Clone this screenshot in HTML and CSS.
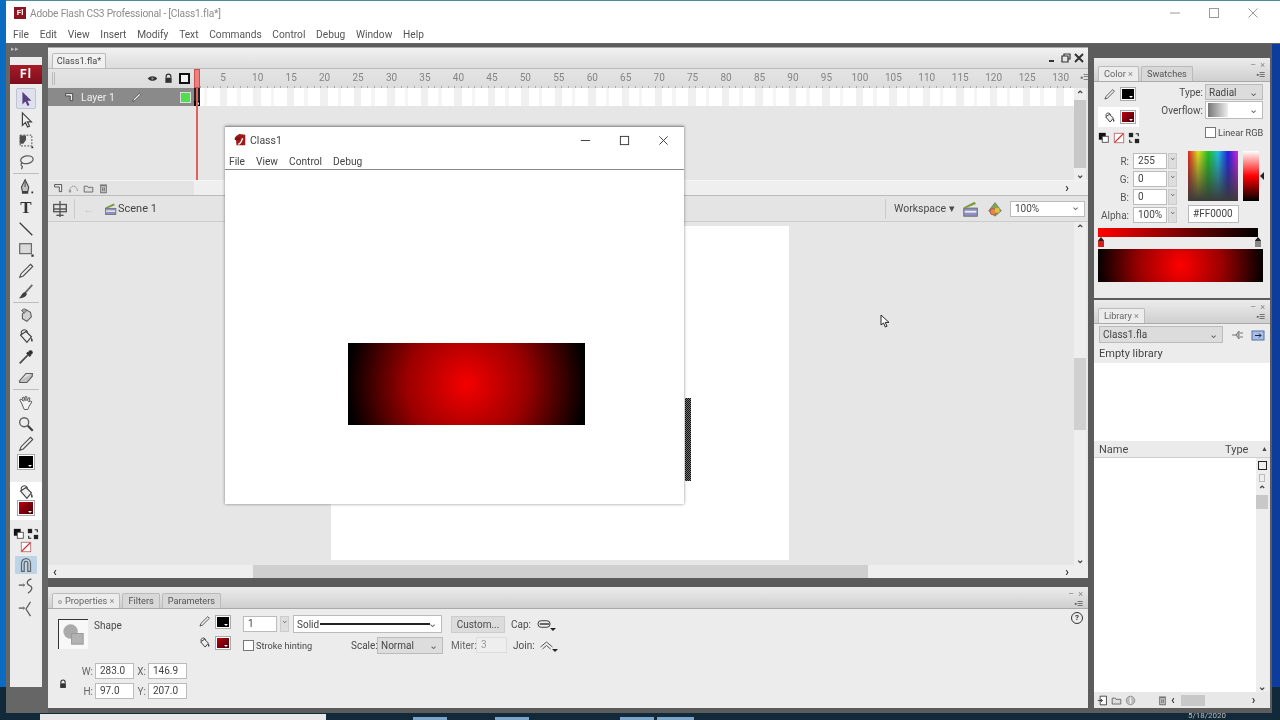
FILE: index.html
```html
<!DOCTYPE html>
<html lang="en">
<head>
<meta charset="utf-8">
<title>Adobe Flash CS3 Professional</title>
<link rel="stylesheet" href="styles.css">
</head>
<body>
<svg class="defs" width="0" height="0" aria-hidden="true">
  <symbol id="i-arrow" viewBox="0 0 20 20"><path d="M6 2v14l3.4-3.2 2.3 5 2.2-1-2.3-4.8H16z"/></symbol>
  <symbol id="i-free" viewBox="0 0 20 20"><rect x="3.5" y="3.5" width="13" height="12" fill="none" stroke="#222" stroke-dasharray="2 1.5"/><path d="M3 4h7v5l-3 4H3z" fill="#333"/><rect x="16" y="16" width="2" height="2" fill="#111"/></symbol>
  <symbol id="i-lasso" viewBox="0 0 20 20"><ellipse cx="11" cy="7.5" rx="7" ry="4.3" fill="none" stroke="#444" stroke-width="1.4" transform="rotate(-10 11 7.5)"/><path d="M6 11c-2 1-2 3 0 4l-1 3" fill="none" stroke="#444" stroke-width="1.4"/></symbol>
  <symbol id="i-pen" viewBox="0 0 20 20"><path d="M9 2l4 8-1 5H6l-1-5z" fill="#bbb" stroke="#222" stroke-width="1.2"/><path d="M9 4v6" stroke="#222"/><rect x="5.5" y="15" width="7" height="2.5" fill="#222"/><rect x="16" y="15" width="2" height="2" fill="#111"/></symbol>
  <symbol id="i-line" viewBox="0 0 20 20"><path d="M3 3l14 14" stroke="#222" stroke-width="1.5"/></symbol>
  <symbol id="i-rect" viewBox="0 0 20 20"><rect x="3" y="3" width="13" height="11" fill="#d8d8d8" stroke="#555" stroke-width="1.4"/><rect x="16" y="15" width="2.5" height="2.5" fill="#111"/></symbol>
  <symbol id="i-pencil" viewBox="0 0 20 20"><path d="M15 2.5l2.5 2.5L7 15.500 3 17l1.500-4z" fill="#eee" stroke="#333" stroke-width="1.200"/></symbol>
  <symbol id="i-brush" viewBox="0 0 20 20"><path d="M17 2L9 11" stroke="#555" stroke-width="2"/><path d="M9 10l2 2c-1 4-5 5-9 5 3-2 3-6 7-7z" fill="#222"/></symbol>
  <symbol id="i-ink" viewBox="0 0 20 20"><path d="M6 9l4-5 5 3 1 5-5 5-5-3z" fill="#ccc" stroke="#444" stroke-width="1.200"/><path d="M5 5l3-2 3 2-3 3z" fill="#999" stroke="#444"/></symbol>
  <symbol id="i-bucket" viewBox="0 0 20 20"><path d="M4 9l6-4 6 6-5 6z" fill="#eee" stroke="#222" stroke-width="1.300"/><path d="M5 8c-2-5 5-7 7-2" fill="none" stroke="#222" stroke-width="1.200"/><path d="M16 12c1.500 1.500 2 3 1 4.500-1.500 0-2-2-1-4.500z" fill="#222"/></symbol>
  <symbol id="i-drop" viewBox="0 0 20 20"><path d="M3 17L12 8" stroke="#333" stroke-width="2"/><path d="M11 5l4 4" stroke="#111" stroke-width="2.500"/><circle cx="15" cy="5" r="2.500" fill="#111"/></symbol>
  <symbol id="i-eraser" viewBox="0 0 20 20"><path d="M3 13l7-8h7l-6 8z" fill="#ddd" stroke="#444" stroke-width="1.200"/><path d="M3 13v2h8l6-7V5" fill="#bbb" stroke="#444" stroke-width="1.200"/></symbol>
  <symbol id="i-hand" viewBox="0 0 20 20"><path d="M5 10L3 6.500l1.500-1L7 8 6 4l1.700-.5L9 7.500V3h1.800l.4 4.500L13 4l1.500.7-1.500 4 2.500-1 1 1-3 5-1.500 3.500H8z" fill="#f4f4f4" stroke="#333" stroke-width="1"/></symbol>
  <symbol id="i-zoom" viewBox="0 0 20 20"><circle cx="8" cy="8" r="5" fill="#eee" stroke="#444" stroke-width="1.500"/><path d="M12 12l5.500 5.500" stroke="#222" stroke-width="2.500"/></symbol>
  <symbol id="i-snap" viewBox="0 0 20 20"><path d="M5 17V8a5 5 0 0110 0v9h-3V8a2 2 0 00-4 0v9z" fill="none" stroke="#555" stroke-width="1.400"/></symbol>
  <symbol id="i-smooth" viewBox="0 0 20 20"><path d="M2 9h5" stroke="#444" stroke-width="1.500"/><path d="M7 7v4l2-2z" fill="#444"/><path d="M16 2c-6 2-6 6-1 8 3 2 1 6-3 8" fill="none" stroke="#444" stroke-width="1.400"/></symbol>
  <symbol id="i-straight" viewBox="0 0 20 20"><path d="M2 9h5" stroke="#444" stroke-width="1.500"/><path d="M7 7v4l2-2z" fill="#444"/><path d="M15 2L10 10l5 8" fill="none" stroke="#444" stroke-width="1.400"/></symbol>
  <symbol id="i-swap" viewBox="0 0 14 14"><rect x="1" y="1" width="8" height="8" fill="#111"/><rect x="5" y="5" width="7" height="7" fill="#fff" stroke="#444"/></symbol>
  <symbol id="i-none" viewBox="0 0 14 14"><rect x="1.500" y="1.500" width="11" height="11" fill="#fff" stroke="#b66"/><path d="M2 12L12 2" stroke="#d33" stroke-width="1.400"/></symbol>
  <symbol id="i-rev" viewBox="0 0 14 14"><rect x="1" y="1" width="5" height="5" fill="#222"/><rect x="8" y="8" width="5" height="5" fill="#222"/><path d="M9 2h3v3M5 12H2V9" fill="none" stroke="#222" stroke-width="1.300"/></symbol>
  <symbol id="i-eye" viewBox="0 0 14 14"><path d="M1 7c3-4 9-4 12 0-3 4-9 4-12 0z" fill="#333"/><circle cx="7" cy="7" r="1.500" fill="#888"/></symbol>
  <symbol id="i-lock" viewBox="0 0 14 14"><path d="M4 6V4.500a3 3 0 016 0V6" fill="none" stroke="#333" stroke-width="1.500"/><rect x="3" y="6" width="8" height="6.500" fill="#333"/></symbol>
  <symbol id="i-layer" viewBox="0 0 14 14"><path d="M2 2h9v9H8V5H2z" fill="#eee" stroke="#333"/></symbol>
  <symbol id="i-guide" viewBox="0 0 14 14"><path d="M2 10c1-8 9-8 10 0" fill="none" stroke="#666" stroke-dasharray="2 1"/><rect x="1" y="9" width="3" height="3" fill="#999"/></symbol>
  <symbol id="i-folder" viewBox="0 0 14 14"><path d="M1.500 4h4l1 1.500h6v6h-11z" fill="#ddd" stroke="#555"/></symbol>
  <symbol id="i-trash" viewBox="0 0 14 14"><rect x="3.500" y="3.500" width="7" height="9" fill="#ccc" stroke="#555"/><path d="M2.500 2.500h9M6 5.500v5M8 5.500v5" stroke="#555"/></symbol>
  <symbol id="i-clap" viewBox="0 0 20 20"><rect x="2" y="9" width="15" height="9" fill="#8f8fc4" stroke="#666"/><rect x="3" y="12" width="13" height="2" fill="#eee"/><path d="M2 8l12-6 1.500 2.500L3 9.500z" fill="#7a9a3a"/></symbol>
  <symbol id="i-sym" viewBox="0 0 20 20"><path d="M3 12l7-9 7 9-7 6z" fill="#7fa84a" stroke="#777"/><circle cx="8" cy="13" r="3.500" fill="#e58a3c" stroke="#a55"/><rect x="10" y="9" width="5" height="5" fill="#e0c040"/></symbol>
  <symbol id="i-mov" viewBox="0 0 20 20"><path d="M10 1v18M3 10h14" stroke="#555" stroke-width="1.500"/><rect x="3" y="5" width="14" height="8" fill="none" stroke="#555" stroke-width="1.500"/><path d="M6 17h8" stroke="#555" stroke-width="1.500"/></symbol>
  <symbol id="i-shape" viewBox="0 0 30 30"><circle cx="12" cy="12" r="7.500" fill="#aaa"/><rect x="13" y="14" width="12" height="11" fill="#b2b2b2" stroke="#999"/></symbol>
  <symbol id="i-flash" viewBox="0 0 16 16"><path d="M3 4l4-3 7 1v12H4z" fill="#a01818"/><path d="M2 5h6v3H2z" fill="#7a1010"/><path d="M6 13c3-1 4-4 5-7" stroke="#fff" stroke-width="1.500" fill="none"/></symbol>
  <symbol id="i-cap" viewBox="0 0 16 10"><rect x="1" y="1.500" width="13" height="7" rx="3.500" fill="none" stroke="#333"/><path d="M3 5h10" stroke="#333" stroke-width="1.500"/></symbol>
  <symbol id="i-join" viewBox="0 0 14 10"><path d="M1 7l6-5 6 5M3 9l4-3.500L11 9" fill="none" stroke="#555"/></symbol>
  <symbol id="i-new" viewBox="0 0 14 14"><path d="M4 1.500h8v11H4z" fill="#fff" stroke="#222"/><path d="M1 7h6M5 5l2 2-2 2" fill="none" stroke="#222"/></symbol>
  <symbol id="i-info" viewBox="0 0 14 14"><circle cx="7" cy="7" r="5.500" fill="#bbb" stroke="#888"/><rect x="6" y="3" width="2" height="8" fill="#eee"/></symbol>
  <symbol id="i-pin" viewBox="0 0 14 14"><path d="M2 7h4l3-4v8L6 7" fill="#bbb" stroke="#777"/><path d="M10 5h3M10 9h3" stroke="#777"/></symbol>
  <symbol id="i-libfolder" viewBox="0 0 14 14"><rect x="1" y="3" width="12" height="9" fill="#a8c0e8" stroke="#5570a0"/><path d="M4 7.500h6M8 5.500l2 2-2 2" fill="none" stroke="#224"/></symbol>
  <symbol id="i-cursor" viewBox="0 0 10 14"><path d="M1 1v10l2.500-2 1.800 4 1.700-.8-1.800-3.800H9z" fill="#fff" stroke="#111" stroke-width=".9"/></symbol>
</svg>

<div class="screen">
  <header class="titlebar">
    <span class="app-icon">Fl</span>
    <span class="app-title">Adobe Flash CS3 Professional - [Class1.fla*]</span>
    <span class="win-buttons">
      <svg class="wb" viewBox="0 0 12 12"><path d="M1 6h10"/></svg>
      <svg class="wb" viewBox="0 0 12 12"><rect x="1.500" y="1.500" width="9" height="9" fill="none"/></svg>
      <svg class="wb" viewBox="0 0 12 12"><path d="M1.500 1.500l9 9M10.500 1.500l-9 9"/></svg>
    </span>
  </header>
  <nav class="menubar">
    <span>File</span><span>Edit</span><span>View</span><span>Insert</span><span>Modify</span><span>Text</span><span>Commands</span><span>Control</span><span>Debug</span><span>Window</span><span>Help</span>
  </nav>

  <div class="workspace">
    <aside class="toolcol">
      <div class="tool-grip">▸▸</div>
      <div class="tools">
        <div class="fl-logo">Fl</div>
        <div class="tool selected"><svg class="ic purple"><use href="#i-arrow"/></svg></div>
        <div class="tool"><svg class="ic hollow"><use href="#i-arrow"/></svg></div>
        <div class="tool"><svg class="ic"><use href="#i-free"/></svg></div>
        <div class="tool"><svg class="ic"><use href="#i-lasso"/></svg></div>
        <div class="tool-sep"></div>
        <div class="tool"><svg class="ic"><use href="#i-pen"/></svg></div>
        <div class="tool tool-t">T</div>
        <div class="tool"><svg class="ic"><use href="#i-line"/></svg></div>
        <div class="tool"><svg class="ic"><use href="#i-rect"/></svg></div>
        <div class="tool"><svg class="ic"><use href="#i-pencil"/></svg></div>
        <div class="tool"><svg class="ic"><use href="#i-brush"/></svg></div>
        <div class="tool-sep tight"></div>
        <div class="tool"><svg class="ic"><use href="#i-ink"/></svg></div>
        <div class="tool"><svg class="ic"><use href="#i-bucket"/></svg></div>
        <div class="tool"><svg class="ic"><use href="#i-drop"/></svg></div>
        <div class="tool"><svg class="ic"><use href="#i-eraser"/></svg></div>
        <div class="tool-sep"></div>
        <div class="tool"><svg class="ic"><use href="#i-hand"/></svg></div>
        <div class="tool"><svg class="ic"><use href="#i-zoom"/></svg></div>
        <div class="tool tool-short"><svg class="ic"><use href="#i-pencil"/></svg></div>
        <div class="tool tool-swatch"><span class="swatch black"></span></div>
        <div class="tool-fill">
          <svg class="ic"><use href="#i-bucket"/></svg>
          <span class="swatch red"></span>
        </div>
        <div class="tool-mini">
          <svg class="mini"><use href="#i-swap"/></svg><svg class="mini"><use href="#i-rev"/></svg>
        </div>
        <div class="tool-none"><svg class="mini"><use href="#i-none"/></svg></div>
        <div class="tool tool-snap"><svg class="ic"><use href="#i-snap"/></svg></div>
        <div class="tool tool-tall"><svg class="ic"><use href="#i-smooth"/></svg></div>
        <div class="tool tool-tall"><svg class="ic"><use href="#i-straight"/></svg></div>
      </div>
    </aside>

    <main class="maincol">
      <section class="doc">
        <div class="doc-tabs">
          <span class="doc-tab">Class1.fla*</span>
          <span class="doc-ctrls">
            <svg class="dc" viewBox="0 0 10 10"><path d="M1 8h5" stroke-width="2"/></svg>
            <svg class="dc" viewBox="0 0 10 10"><path d="M1 3h6v6H1zM3 3V1h6v5H7" fill="none" stroke-width="1.200"/></svg>
            <svg class="dc" viewBox="0 0 10 10"><path d="M1 1l8 8M9 1l-8 8" stroke-width="2"/></svg>
          </span>
        </div>

        <div class="timeline">
          <div class="ruler-row">
            <div class="ruler-left">
              <span class="grip"></span>
              <svg class="tl-ic"><use href="#i-eye"/></svg>
              <svg class="tl-ic"><use href="#i-lock"/></svg>
              <span class="outline-box"></span>
            </div>
            <div class="playhead-slot"></div>
            <div class="ruler">
              <span class="n first">5</span><span class="n">10</span><span class="n">15</span><span class="n">20</span><span class="n">25</span><span class="n">30</span><span class="n">35</span><span class="n">40</span><span class="n">45</span><span class="n">50</span><span class="n">55</span><span class="n">60</span><span class="n">65</span><span class="n">70</span><span class="n">75</span><span class="n">80</span><span class="n">85</span><span class="n">90</span><span class="n">95</span><span class="n">100</span><span class="n">105</span><span class="n">110</span><span class="n">115</span><span class="n">120</span><span class="n">125</span><span class="n">130</span>
            </div>
            <span class="panel-menu">▪☰</span>
          </div>
          <div class="tl-body">
            <div class="tl-left">
              <div class="layer-row">
                <svg class="tl-ic layer-ic"><use href="#i-layer"/></svg>
                <span class="layer-name">Layer 1</span>
                <svg class="tl-ic pencil-ic"><use href="#i-pencil"/></svg>
                <span class="layer-color"></span>
              </div>
            </div>
            <div class="tl-right">
              <div class="frames"><span class="keyframe"></span></div>
            </div>
            <div class="vscroll">
              <span class="arr">⌃</span>
              <span class="thumb tl-thumb"></span>
              <span class="arr">⌄</span>
            </div>
          </div>
          <div class="tl-foot">
            <div class="tl-foot-left">
              <svg class="tf"><use href="#i-layer"/></svg><svg class="tf"><use href="#i-guide"/></svg><svg class="tf"><use href="#i-folder"/></svg><svg class="tf"><use href="#i-trash"/></svg>
            </div>
            <div class="tl-foot-right">
              <span class="chev">›</span>
            </div>
          </div>
          <div class="playhead"><span class="ph-head"></span><span class="ph-line"></span></div>
        </div>

        <div class="editbar">
          <svg class="eb-ic"><use href="#i-mov"/></svg>
          <span class="eb-sep"></span>
          <span class="eb-back">←</span>
          <svg class="eb-ic clap"><use href="#i-clap"/></svg>
          <span class="scene">Scene 1</span>
          <span class="eb-right">
            <span class="eb-sep"></span>
            <span class="workspace-btn">Workspace ▾</span>
            <svg class="eb-ic"><use href="#i-clap"/></svg>
            <svg class="eb-ic"><use href="#i-sym"/></svg>
            <span class="zoom-select">100%<span class="caret">⌄</span></span>
          </span>
        </div>

        <div class="canvas-row">
          <div class="canvas">
            <div class="stage"><span class="selection"></span></div>
            <svg class="cursor"><use href="#i-cursor"/></svg>
          </div>
          <div class="vscroll canvas-v">
            <span class="arr">⌃</span>
            <span class="thumb canvas-thumb"></span>
            <span class="arr">⌄</span>
          </div>
        </div>
        <div class="hscroll">
          <span class="chev">‹</span>
          <span class="hthumb"></span>
          <span class="chev">›</span>
        </div>
      </section>

      <section class="props">
        <div class="panel-head props-head">
          <span class="tab active"><i class="dot"></i>Properties <b>×</b></span>
          <span class="tab">Filters</span>
          <span class="tab">Parameters</span>
          <span class="ph-ctrl"><span>–</span><span>×</span><span class="ph-menu">▪☰</span></span>
        </div>
        <div class="props-body">
          <div class="pb-left">
            <div class="pb-shape">
              <svg class="thumbnail"><use href="#i-shape"/></svg>
              <span class="shape-label">Shape</span>
            </div>
            <div class="pb-dims">
              <svg class="lock"><use href="#i-lock"/></svg>
              <div class="dim-grid">
                <label>W:</label><span class="field">283.0</span><label>X:</label><span class="field">146.9</span>
                <label>H:</label><span class="field">97.0</span><label>Y:</label><span class="field">207.0</span>
              </div>
            </div>
          </div>
          <div class="pb-colors">
            <div class="pc-row"><svg class="pc-ic"><use href="#i-pencil"/></svg><span class="swatch sm black"></span></div>
            <div class="pc-row"><svg class="pc-ic"><use href="#i-bucket"/></svg><span class="swatch sm red"></span></div>
          </div>
          <div class="pb-stroke">
            <div class="st-row r1">
              <span class="field f-weight">1</span>
              <span class="stepper">⌄</span>
              <span class="select solid">Solid<span class="stroke-line"></span><span class="caret">⌄</span></span>
              <span class="button">Custom...</span>
              <span class="cap-lbl">Cap:</span>
              <svg class="cap-ic"><use href="#i-cap"/></svg>
              <span class="tiny-tri"></span>
            </div>
            <div class="st-row r2">
              <span class="check"></span>
              <span class="hint">Stroke hinting</span>
              <span class="scale-lbl">Scale:</span>
              <span class="select scale">Normal<span class="caret">⌄</span></span>
              <span class="miter-lbl">Miter:</span>
              <span class="field miter">3</span>
              <span class="join-lbl">Join:</span>
              <svg class="cap-ic"><use href="#i-join"/></svg>
              <span class="tiny-tri"></span>
            </div>
          </div>
          <span class="help">?</span>
        </div>
      </section>
    </main>

    <aside class="sidecol">
      <section class="color-panel">
        <div class="panel-head">
          <span class="tab active">Color <b>×</b></span>
          <span class="tab">Swatches</span>
          <span class="ph-ctrl"><span>–</span><span>×</span><span class="ph-menu">▪☰</span></span>
        </div>
        <div class="cp-body">
          <div class="cp-top">
            <div class="cp-tools">
              <div class="cp-stroke"><svg class="pc-ic"><use href="#i-pencil"/></svg><span class="swatch sm black"></span></div>
              <div class="cp-fill"><svg class="pc-ic"><use href="#i-bucket"/></svg><span class="swatch sm red"></span></div>
              <div class="cp-mini"><svg class="mini"><use href="#i-swap"/></svg><svg class="mini"><use href="#i-none"/></svg><svg class="mini"><use href="#i-rev"/></svg></div>
            </div>
            <div class="cp-opts">
              <div class="cp-opt"><span>Type:</span><span class="select gray">Radial<span class="caret">⌄</span></span></div>
              <div class="cp-opt"><span>Overflow:</span><span class="select overflow"><i class="ov-sw"></i><span class="caret">⌄</span></span></div>
              <div class="cp-lin"><span class="check"></span><span>Linear RGB</span></div>
            </div>
          </div>
          <div class="cp-mid">
            <div class="cp-rgb">
              <div class="rgb-row"><label>R:</label><span class="field">255</span><span class="stepper">⌄</span></div>
              <div class="rgb-row"><label>G:</label><span class="field">0</span><span class="stepper">⌄</span></div>
              <div class="rgb-row"><label>B:</label><span class="field">0</span><span class="stepper">⌄</span></div>
              <div class="rgb-row"><label>Alpha:</label><span class="field">100%</span><span class="stepper">⌄</span></div>
            </div>
            <div class="cp-picker">
              <div class="pick-top"><span class="spectrum"></span><span class="value"></span><span class="val-tri"></span></div>
              <span class="field hex">#FF0000</span>
            </div>
          </div>
          <div class="grad-bar"></div>
          <div class="grad-stops"><span class="stop s-red"></span><span class="stop s-black"></span></div>
          <div class="grad-preview"></div>
        </div>
      </section>

      <section class="library">
        <div class="panel-head">
          <span class="tab active">Library <b>×</b></span>
          <span class="ph-ctrl"><span>–</span><span>×</span><span class="ph-menu">▪☰</span></span>
        </div>
        <div class="lib-select-row">
          <span class="select gray lib-select">Class1.fla<span class="caret">⌄</span></span>
          <svg class="lib-ic"><use href="#i-pin"/></svg>
          <svg class="lib-ic"><use href="#i-libfolder"/></svg>
        </div>
        <div class="lib-empty">Empty library</div>
        <div class="lib-preview"></div>
        <div class="lib-cols"><span class="col-name">Name</span><span class="col-type">Type</span><span class="col-sort">▲</span></div>
        <div class="lib-list">
          <div class="lib-items"></div>
          <div class="lib-scroll">
            <span class="ls-box"></span><span class="ls-box2"></span>
            <span class="arr">⌃</span>
            <span class="lib-thumb"></span>
            <span class="arr ls-end">⌄</span>
          </div>
        </div>
        <div class="lib-foot">
          <svg class="tf"><use href="#i-new"/></svg><svg class="tf"><use href="#i-folder"/></svg><svg class="tf"><use href="#i-info"/></svg>
          <svg class="tf trash"><use href="#i-trash"/></svg>
          <span class="chev">‹</span><span class="lf-thumb"></span><span class="chev lf-r">›</span>
        </div>
      </section>
    </aside>
  </div>

  <footer class="taskbar">
    <span class="tb-search"></span>
    <span class="tb-app a1"></span>
    <span class="tb-app a2"></span>
    <span class="tb-app a3"></span>
    <span class="tb-app a4"></span>
    <span class="tb-date">5/18/2020</span>
  </footer>

  <div class="player">
    <div class="player-title">
      <svg class="player-ic"><use href="#i-flash"/></svg>
      <span>Class1</span>
      <span class="player-btns">
        <svg class="wb dark" viewBox="0 0 12 12"><path d="M1 6h10"/></svg>
        <svg class="wb dark" viewBox="0 0 12 12"><rect x="1.500" y="1.500" width="9" height="9" fill="none"/></svg>
        <svg class="wb dark" viewBox="0 0 12 12"><path d="M1.500 1.500l9 9M10.500 1.500l-9 9"/></svg>
      </span>
    </div>
    <div class="player-menu"><span>File</span><span>View</span><span>Control</span><span>Debug</span></div>
    <div class="player-content"><div class="movie-rect"></div></div>
  </div>
</div>
</body>
</html>
```

FILE: styles.css
```css
* { box-sizing: border-box; }
html, body { margin: 0; padding: 0; }
body { width: 1280px; height: 720px; overflow: hidden; background: #12293a; font-family: Roboto, "Liberation Sans", sans-serif; font-size: 10px; color: #4a4a4a; }
.defs { position: absolute; }

.screen { position: relative; width: 1280px; height: 720px; display: flex; flex-direction: column; filter: blur(.4px); background: linear-gradient(#0a6cc0, #0a6cc0) left top / 6px 687px no-repeat, #12293a; }

/* Title + menu */
.titlebar { height: 25px; margin-left: 6px; background: #fff; border-top: 1px solid #4d8ca0; display: flex; align-items: center; padding-left: 8px; }
.app-icon { width: 12px; height: 12px; background: #8c1520; color: #fff; font-size: 8px; font-weight: 700; line-height: 12px; text-align: center; }
.app-title { margin-left: 4px; color: #8c8c8c; font-size: 10.200px; letter-spacing: -.2px; }
.win-buttons { margin-left: auto; display: flex; gap: 27px; margin-right: 21px; }
.wb { width: 12px; height: 12px; stroke: #9a9a9a; fill: none; stroke-width: 1; }
.wb.dark { stroke: #333; width: 11px; height: 11px; }
.menubar { height: 18px; margin-left: 6px; background: #fff; display: flex; align-items: center; padding-left: 7px; gap: 10.700px; font-size: 10.200px; color: #555; }

/* Workspace */
.workspace { height: 670px; margin-left: 6px; display: flex; background: linear-gradient(90deg, #5c5c5c 0 1266px, transparent 1266px), linear-gradient(#0c3c9c 0 643px, #12293a 643px); border-top: 1px solid #666; }
.toolcol { width: 42px; flex: none; display: flex; flex-direction: column; background: #666; }
.tool-grip { height: 13px; padding-left: 5px; color: #bbb; font-size: 7px; line-height: 10px; }
.tools { margin-left: 4px; width: 32px; height: 630px; background: #ececec; display: flex; flex-direction: column; align-items: center; padding-top: 8px; }
.fl-logo { align-self: stretch; height: 19px; background: linear-gradient(#a81a28, #7c0e1c); color: #fff; font-size: 12px; font-weight: 700; line-height: 19px; text-align: center; letter-spacing: 1px; margin-bottom: 4px; }
.tool { width: 20px; height: 21px; display: flex; align-items: center; justify-content: center; flex: none; }
.tool.selected { background: #dfe2ee; border: 1px solid #bfc4d4; border-radius: 2px; }
.ic { width: 18px; height: 18px; flex: none; opacity: .85; }
.purple { fill: #40246e; }
.hollow { fill: #eee; stroke: #222; stroke-width: 1.300; }
.tool-t { font-family: "Liberation Serif", serif; font-size: 17px; font-weight: 700; color: #333; }
.tool-sep { width: 26px; height: 1px; background: #bdbdbd; margin: 1px 0 2px; flex: none; }
.tool-sep.tight { margin: 0 0 1px; }
.tool-short { height: 19px; }
.tool-swatch { height: 18px; }
.swatch { display: block; width: 16px; height: 14px; background: #000; border: 1px solid #fff; outline: 1px solid #aaa; position: relative; }
.swatch::after { content: ""; position: absolute; right: 1px; bottom: 1px; border: 2.500px solid transparent; border-top-color: #fff; border-bottom-width: 0; }
.swatch.red { background: linear-gradient(135deg, #c00010, #400008); }
.swatch.black { background: #000; }
.swatch.sm { width: 14px; height: 12px; }
.tool-fill { margin-top: 11px; width: 32px; height: 38px; background: #fff; display: flex; flex-direction: column; align-items: center; gap: 0; padding-top: 1px; flex: none; }
.tool-mini { display: flex; gap: 2px; margin-top: 8px; height: 13px; }
.mini { width: 12px; height: 12px; }
.tool-none { height: 14px; }
.tool-snap { width: 22px; height: 18px; background: #bcd4e6; border-radius: 1px; margin-top: 1px; }
.tool-tall { height: 23px; }

/* Main */
.maincol { width: 1040px; flex: none; display: flex; flex-direction: column; gap: 9px; padding-top: 3px; }
.doc { height: 531px; display: flex; flex-direction: column; background: #e8e8e8; border-top: 1px solid #aaa; }
.doc-tabs { height: 21px; flex: none; background: linear-gradient(#f2f2f2, #dcdcdc); display: flex; align-items: flex-end; padding-left: 4px; border-bottom: 1px solid #bbb; }
.doc-tab { width: 54px; height: 15px; background: #f0f0f0; border: 1px solid #bbb; border-bottom: 0; border-radius: 2px 2px 0 0; font-size: 9.200px; line-height: 14px; text-align: center; color: #444; }
.doc-ctrls { margin-left: auto; align-self: center; display: flex; gap: 3px; padding-right: 4px; }
.dc { width: 10px; height: 10px; stroke: #333; }

.timeline { position: relative; height: 126px; flex: none; display: flex; flex-direction: column; background: #e6e6e6; }
.ruler-row { height: 19px; flex: none; display: flex; background: linear-gradient(#e4e4e4, #dcdcdc); }
.ruler-left { width: 146px; flex: none; display: flex; align-items: center; gap: 5px; padding-right: 4px; justify-content: flex-end; position: relative; }
.grip { margin-right: auto; margin-left: 4px; width: 3px; height: 13px; border-left: 1px solid #bbb; border-right: 1px solid #bbb; }
.tl-ic { width: 11px; height: 11px; }
.outline-box { width: 11px; height: 11px; border: 2px solid #111; background: #f4f4f4; }
.playhead-slot { width: 6px; flex: none; }
.ruler { flex: 1; display: flex; font-size: 10px; color: #858585; line-height: 17px; background: repeating-linear-gradient(90deg, #aaa 0 1px, transparent 1px 6.692px) left bottom / 100% 2px no-repeat; padding-left: 5px; }
.n { width: 33.460px; flex: none; text-align: center; }
.n.first { width: 36px; }
.panel-menu { width: 16px; flex: none; font-size: 8px; color: #666; line-height: 18px; text-align: center; }
.tl-body { height: 92px; flex: none; display: flex; }
.tl-left { width: 146px; flex: none; }
.layer-row { height: 18px; background: #8a8a8a; display: flex; align-items: center; position: relative; }
.layer-ic { margin-left: 16px; }
.layer-name { margin-left: 6px; color: #eee; font-size: 10.500px; width: 50px; }
.pencil-ic { margin-left: 0; }
.layer-color { margin-left: auto; margin-right: 4px; width: 9px; height: 9px; background: #4ede4e; outline: 1px solid #ddd; }
.tl-right { flex: 1; }
.frames { height: 18px; background: repeating-linear-gradient(90deg, #fff 0 10px, #f5f5f5 10px 13.380px, #fff 13.380px 26px, #f0f0f0 26px 33.460px); display: flex; }
.keyframe { width: 6px; background: linear-gradient(#222 70%, #000 70%); position: relative; }
.keyframe::after { content: ""; position: absolute; left: 1.500px; bottom: 1px; width: 3px; height: 3px; border-radius: 50%; background: #fff; }
.vscroll { width: 12px; margin-right: 2px; flex: none; background: #eee; display: flex; flex-direction: column; align-items: center; }
.arr { height: 12px; flex: none; font-size: 10px; line-height: 14px; color: #444; font-weight: 700; }
.thumb { width: 100%; background: #c8c8c8; display: block; }
.tl-thumb { flex: 1; }
.tl-foot { height: 15px; flex: none; display: flex; background: #e4e4e4; border-top: 1px solid #f4f4f4; }
.tl-foot-left { width: 146px; display: flex; align-items: center; gap: 4px; padding-left: 5px; }
.tf { width: 11px; height: 11px; flex: none; }
.tl-foot-right { flex: 1; display: flex; align-items: center; justify-content: flex-end; background: #efefef; padding-right: 19px; }
.chev { font-size: 12px; line-height: 12px; font-weight: 700; color: #333; }
.playhead { position: absolute; left: 146px; top: 0; width: 6px; height: 111px; display: flex; flex-direction: column; align-items: center; }
.ph-head { width: 6px; height: 19px; background: #ee8080; border: 1px solid #c85050; flex: none; }
.ph-line { width: 1.500px; flex: 1; background: #e06060; }

.editbar { height: 27px; flex: none; display: flex; align-items: center; background: #e4e4e4; border-top: 1px solid #bbb; border-bottom: 1px solid #ccc; padding-left: 3px; }
.eb-ic { width: 18px; height: 18px; flex: none; }
.eb-sep { width: 1px; height: 20px; background: #ccc; margin: 0 8px 0 5px; }
.eb-back { color: #c8c8c8; font-size: 12px; width: 10px; text-align: center; }
.eb-ic.clap { width: 14px; height: 14px; margin-left: 11px; }
.scene { margin-left: 0; font-size: 11px; color: #444; }
.eb-right { margin-left: auto; display: flex; align-items: center; gap: 6px; padding-right: 3px; }
.eb-right .eb-sep { margin: 0 2px 0 0; }
.workspace-btn { width: 62px; font-size: 10.500px; }
.zoom-select { width: 75px; height: 16px; background: #fff; border: 1px solid #bbb; padding-left: 4px; line-height: 14px; position: relative; font-size: 10px; }
.caret { position: absolute; right: 4px; top: 0; color: #666; font-size: 11px; line-height: 9px; }

.canvas-row { flex: 1; display: flex; min-height: 0; }
.canvas { flex: 1; position: relative; background: #e6e6e6; }
.stage { position: absolute; left: 283px; top: 4px; width: 458px; height: 334px; background: #fff; }
.selection { position: absolute; left: 354px; top: 172px; width: 6px; height: 83px; background: repeating-conic-gradient(#111 0 25%, #777 0 50%) 0 0 / 2px 2px; }
.cursor { position: absolute; left: 832px; top: 92px; width: 10px; height: 14px; }
.canvas-v .canvas-thumb { height: 72px; margin-top: 124px; background: #d0d0d0; }
.canvas-v .arr:last-child { margin-top: auto; }
.hscroll { height: 13px; flex: none; display: flex; align-items: center; background: #eee; padding: 0 19px 0 5px; }
.hthumb { width: 615px; height: 13px; background: #cfcfcf; margin-left: 196px; }
.hscroll .chev:last-child { margin-left: auto; }

/* Panels */
.panel-head { height: 24px; flex: none; display: flex; align-items: flex-end; gap: 2px; padding-left: 4px; position: relative; background: linear-gradient(#ececec, #cfcfcf); border-bottom: 1px solid #aaa; }
.tab { height: 15px; padding: 0 5px; font-size: 9.200px; line-height: 14px; color: #555; background: #d8d8d8; border: 1px solid #bbb; border-bottom: 0; border-radius: 2px 2px 0 0; }
.tab.active { background: #ececec; color: #666; }
.tab b { font-weight: 400; color: #888; }
.dot { display: inline-block; width: 4px; height: 4px; border: 1px solid #999; border-radius: 50%; margin-right: 3px; }
.ph-ctrl { position: absolute; right: 5px; top: 2px; display: flex; flex-wrap: wrap; justify-content: flex-end; width: 24px; gap: 0 4px; font-size: 9px; line-height: 10px; color: #888; }
.ph-menu { width: 100%; text-align: right; font-size: 7px; color: #555; }

.props { height: 121px; flex: none; display: flex; flex-direction: column; background: #ececec; }
.props-head { height: 22px; }
.props-body { flex: 1; display: flex; position: relative; font-size: 10px; }
.pb-left { width: 146px; flex: none; }
.pb-shape { display: flex; padding: 10px 0 0 10px; height: 54px; }
.thumbnail { width: 30px; height: 30px; background: #f8f8f8; border-left: 1px solid #333; border-top: 1px solid #333; }
.shape-label { margin-left: 6px; line-height: 12px; margin-top: 1px; }
.pb-dims { display: flex; align-items: center; padding-left: 10px; }
.lock { width: 10px; height: 10px; margin-top: 6px; }
.dim-grid { display: grid; grid-template-columns: 15px 39px 14px 39px; grid-auto-rows: 16px; gap: 4px 0; margin-left: 12px; align-items: center; }
.dim-grid label { text-align: right; padding-right: 2px; color: #666; }
.field { display: block; background: #fff; border: 1px solid #bbb; padding-left: 4px; line-height: 14px; color: #444; height: 16px; font-size: 10px; }
.pb-colors { width: 37px; flex: none; padding-top: 5px; margin-left: 2px; }
.pc-row { display: flex; align-items: center; height: 15px; margin-bottom: 6px; gap: 5px; padding-left: 2px; justify-content: flex-start; }
.pc-ic { width: 13px; height: 13px; flex: none; }
.pb-stroke { flex: 1; padding: 6px 0 0 10px; }
.st-row { display: flex; align-items: center; position: relative; }
.r1 { height: 18px; }
.r2 { height: 18px; margin-top: 3px; }
.f-weight { width: 34px; }
.stepper { width: 9px; height: 16px; margin-left: 3px; flex: none; background: #ddd; border: 1px solid #ccc; color: #777; font-size: 9px; line-height: 7px; text-align: center; }
.select { height: 17px; display: flex; align-items: center; position: relative; border: 1px solid #bbb; padding-left: 3px; background: #fff; color: #444; font-size: 10px; }
.select .caret { top: 3px; }
.solid { width: 149px; margin-left: 4px; height: 18px; }
.stroke-line { width: 110px; height: 2px; background: #222; margin-left: 1px; }
.button { width: 54px; height: 17px; margin-left: 9px; background: #dcdcdc; border: 1px solid #ccc; text-align: center; line-height: 15px; }
.cap-lbl { margin-left: 6px; width: 26px; }
.cap-ic { width: 15px; height: 10px; }
.tiny-tri { width: 0; height: 0; border: 3px solid transparent; border-top-color: #222; border-bottom: 0; margin: 10px 0 0 -2px; }
.check { display: block; width: 11px; height: 11px; background: #fff; border: 1px solid #777; flex: none; }
.hint { margin-left: 2px; width: 95px; font-size: 9.200px; }
.scale-lbl { width: 26px; }
.scale { width: 66px; background: #ddd; }
.miter-lbl { margin-left: 8px; width: 25px; color: #666; }
.miter { width: 31px; background: #eee; color: #999; border-color: #ddd; }
.join-lbl { margin-left: 6px; width: 26px; }
.help { position: absolute; right: 5px; top: 3px; width: 12px; height: 12px; border: 1px solid #333; border-radius: 50%; font-size: 8px; font-weight: 700; line-height: 10px; text-align: center; color: #333; }

/* Side */
.sidecol { width: 176px; margin-left: 6px; flex: none; display: flex; flex-direction: column; gap: 2px; padding-top: 14px; }
.color-panel { height: 240px; flex: none; background: #ececec; display: flex; flex-direction: column; }
.cp-body { flex: 1; padding: 1px 5px 0 4px; font-size: 10px; }
.cp-top { height: 68px; display: flex; justify-content: space-between; }
.cp-tools { width: 42px; }
.cp-stroke { display: flex; gap: 5px; padding-left: 5px; height: 18px; align-items: center; margin-top: 2px; }
.cp-fill { display: flex; gap: 5px; padding-left: 5px; height: 20px; width: 41px; background: #fff; align-items: center; margin-top: 4px; }
.cp-mini { display: flex; gap: 3px; margin-top: 5px; }
.cp-opts { width: 100px; margin-right: 2px; }
.cp-opt { display: flex; justify-content: flex-end; align-items: center; gap: 2px; height: 18px; }
.cp-opt .select { width: 58px; height: 16px; flex: none; }
.select.gray { background: #dcdcdc; }
.cp-opt .overflow { height: 18px; }
.ov-sw { width: 20px; height: 14px; background: linear-gradient(90deg, #777, #eee); margin-left: -1px; }
.cp-lin { display: flex; align-items: center; gap: 2px; margin-top: 8px; padding-left: 42px; white-space: nowrap; font-size: 9.200px; }
.cp-mid { display: flex; }
.cp-rgb { width: 79px; padding-top: 2px; display: flex; flex-direction: column; gap: 2px; }
.rgb-row { display: flex; align-items: center; height: 16px; }
.rgb-row label { width: 35px; text-align: right; padding-right: 4px; color: #555; }
.rgb-row .field { width: 34px; }
.rgb-row .stepper { margin-left: 1px; }
.cp-picker { margin-left: 11px; }
.pick-top { display: flex; align-items: center; }
.spectrum { width: 50px; height: 50px; background: linear-gradient(transparent, #3a3a3a), linear-gradient(90deg, #e02020, #e0e020, #20c020, #20c0e0, #2020e0, #e020e0); }
.value { width: 16px; height: 50px; margin-left: 5px; background: linear-gradient(#fff, #f00 50%, #000); }
.val-tri { width: 0; height: 0; border: 4px solid transparent; border-right-color: #222; border-left: 0; margin-left: 1px; }
.hex { width: 51px; height: 18px; margin-top: 4px; line-height: 15px; }
.grad-bar { width: 160px; height: 9px; margin-top: 5px; background: linear-gradient(90deg, #f00, #000); }
.grad-stops { width: 163px; height: 10px; display: flex; justify-content: space-between; }
.stop { width: 6px; height: 10px; background: #333; clip-path: polygon(50% 0, 100% 35%, 100% 100%, 0 100%, 0 35%); }
.s-red { background: linear-gradient(#222 35%, #d02020 35%); }
.s-black { background: linear-gradient(#222 35%, #888 35%); }
.grad-preview { width: 165px; height: 33px; margin-top: 2px; background: radial-gradient(circle 84px at center, #f00, #9a0000 50%, #000); }

.library { flex: 1; background: #ececec; display: flex; flex-direction: column; margin-bottom: 5px; }
.lib-select-row { height: 21px; flex: none; display: flex; align-items: center; padding-left: 5px; gap: 7px; }
.lib-select { width: 124px; height: 17px; }
.lib-ic { width: 14px; height: 14px; }
.lib-empty { height: 18px; flex: none; padding-left: 5px; font-size: 11px; line-height: 17px; color: #444; }
.lib-preview { height: 78px; flex: none; background: #fff; }
.lib-cols { height: 17px; flex: none; display: flex; align-items: center; padding-left: 5px; background: #ebebeb; font-size: 11px; border-bottom: 1px solid #ccc; }
.col-name { width: 126px; }
.col-type { width: 36px; }
.col-sort { font-size: 7px; }
.lib-list { flex: 1; display: flex; min-height: 0; }
.lib-items { flex: 1; background: #fff; }
.lib-scroll { width: 12px; margin-right: 2px; background: #eee; display: flex; flex-direction: column; align-items: center; }
.ls-box { width: 9px; height: 9px; border: 1.500px solid #222; margin-top: 3px; flex: none; }
.ls-box2 { width: 6px; height: 8px; border: 1px solid #bbb; margin: 4px 0 1px; flex: none; }
.lib-thumb { width: 12px; height: 14px; background: #c8c8c8; flex: none; }
.ls-end { margin-top: auto; }
.lib-foot { height: 16px; flex: none; display: flex; align-items: center; gap: 3px; padding-left: 3px; background: #e8e8e8; }
.trash { margin-left: 18px; }
.lf-thumb { width: 24px; height: 11px; background: #c8c8c8; margin-left: 3px; }
.lf-r { margin-left: 44px; }

/* Taskbar */
.taskbar { flex: 1; position: relative; display: flex; align-items: flex-end; background: #12293a; }
.tb-search { width: 286px; height: 6px; margin-left: 40px; background: #e8e8e8; }
.tb-app { width: 34px; height: 3px; background: #7ca4c8; }
.a1 { margin-left: 87px; }
.a2 { margin-left: 48px; }
.a3 { margin-left: 91px; }
.a4 { margin-left: 3px; width: 37px; }
.tb-date { position: absolute; left: 1188px; top: -2px; color: #bbb; font-size: 8px; line-height: 9px; }

/* Floating player window */
.player { position: absolute; left: 225px; top: 126px; width: 459px; height: 378px; background: #fff; border-top: 1px solid #999; box-shadow: 0 0 3px rgba(0,0,0,.45); display: flex; flex-direction: column; color: #444; }
.player-title { height: 26px; flex: none; display: flex; align-items: center; padding-left: 8px; gap: 3px; font-size: 10.500px; }
.player-ic { width: 14px; height: 14px; }
.player-btns { margin-left: auto; display: flex; gap: 28px; padding-right: 15px; }
.player-menu { height: 17px; flex: none; display: flex; gap: 11px; padding-left: 4px; align-items: center; font-size: 10.200px; border-bottom: 1px solid #888; }
.player-content { flex: 1; position: relative; }
.movie-rect { position: absolute; left: 123px; top: 173px; width: 237px; height: 82px; background: radial-gradient(circle 120px at center, #f50000, #9a0000 50%, #000); }
```
